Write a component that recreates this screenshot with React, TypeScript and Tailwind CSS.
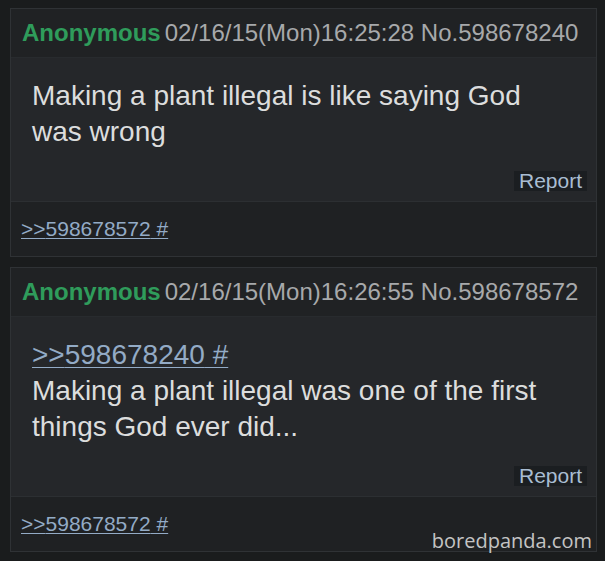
import React from "react";

type Post = {
  time: string;
  no: string;
  quote?: string;
  lines: string;
  backlink: string;
};

const posts: Post[] = [
  {
    time: "02/16/15(Mon)16:25:28",
    no: "598678240",
    lines: "Making a plant illegal is like saying God was wrong",
    backlink: "598678572",
  },
  {
    time: "02/16/15(Mon)16:26:55",
    no: "598678572",
    quote: "598678240",
    lines: "Making a plant illegal was one of the first things God ever did...",
    backlink: "598678572",
  },
];

function PostCard({ post }: { post: Post }) {
  return (
    <div className="w-[587px] border border-[#2f3235] bg-[#202224]">
      {/* header */}
      <div className="flex items-baseline whitespace-nowrap px-[11px] py-[10px] text-[24px] leading-[28px] border-b border-[#282b2e]">
        <span className="font-bold text-[#2f9c5b]">Anonymous</span>
        <span className="ml-[4px] text-[#a7a9ab]">
          {post.time} No.{post.no}
        </span>
      </div>

      {/* body */}
      <div className="bg-[#25272a] pl-[21px] pr-[9px] pt-[20px] pb-[10px] border-b border-[#2c2f32]">
        <div className="max-w-[525px] text-[28px] leading-[36px] text-[#dcdddd]">
          {post.quote && (
            <a className="block w-fit text-[#93abc6] underline decoration-1 underline-offset-[3px]">
              &gt;&gt;{post.quote} #
            </a>
          )}
          <p>{post.lines}</p>
        </div>
        <div className="mt-[21px] flex justify-end">
          <span className="bg-[#1b1e21] px-[5px] h-[20px] leading-[20px] text-[21px] text-[#a9bdd2]">
            Report
          </span>
        </div>
      </div>

      {/* footer */}
      <div className="bg-[#1f2123] px-[10px] py-[15px] leading-[24px] text-[21px]">
        <a className="text-[#93abc6] underline decoration-1 underline-offset-[2px]">
          &gt;&gt;{post.backlink} #
        </a>
      </div>
    </div>
  );
}

export default function App() {
  return (
    <div className="relative w-[605px] h-[561px] overflow-hidden bg-[#1a1c1d] pl-[10px] pt-[8px] flex flex-col gap-[10px] font-['Liberation_Sans',Arial,sans-serif]">
      {posts.map((p) => (
        <PostCard key={p.no} post={p} />
      ))}
      <span className="absolute right-[13px] top-[531px] text-[20px] leading-none text-[#c4c4c4] font-['Open_Sans',sans-serif]">
        boredpanda.com
      </span>
    </div>
  );
}
